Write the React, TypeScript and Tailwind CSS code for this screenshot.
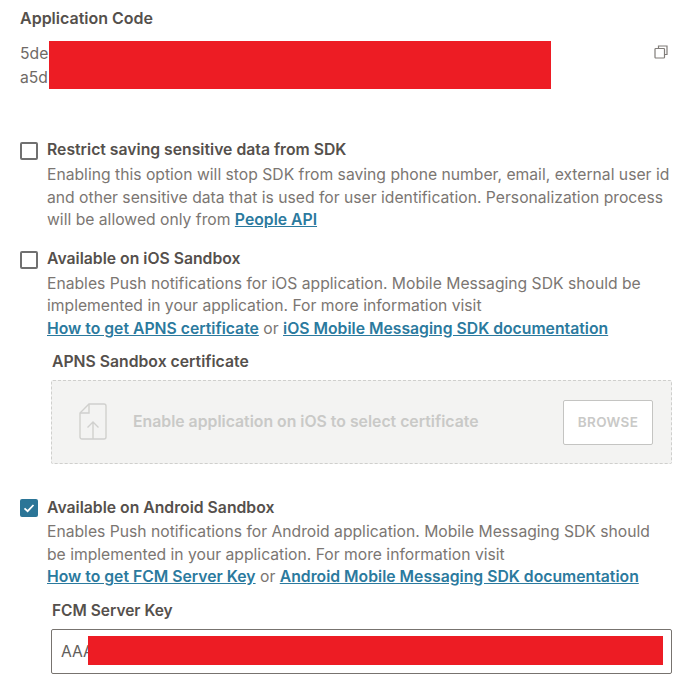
import React from "react";

const Link = ({ children }: { children: React.ReactNode }) => (
  <a className="text-[15.75px] font-semibold text-[#2b7a9e] underline">{children}</a>
);

const Check = ({ checked, tight, label, children }: { checked?: boolean; tight?: boolean; label: string; children: React.ReactNode }) => (
  <div className="flex gap-[9px]">
    {checked ? (
      <div className="mt-[2px] flex h-[18px] w-[18px] shrink-0 items-center justify-center rounded-[2px] bg-[#2b7597]">
        <svg width="12" height="12" viewBox="0 0 12 12" fill="none" stroke="white" strokeWidth="1.8">
          <path d="M1.5 6.4 L4.6 9.2 L10.5 3" />
        </svg>
      </div>
    ) : (
      <div className="mt-[3px] h-[18px] w-[18px] shrink-0 rounded-[2px] border-2 border-[#707070] bg-white" />
    )}
    <div className="min-w-0 flex-1">
      <div className={tight ? "mb-[2.25px] text-[15.75px] leading-[22px] font-semibold text-[#55504c]" : "mb-[3.25px] text-[15.75px] leading-[22px] font-semibold text-[#55504c]"}>{label}</div>
      <div className="text-[15.7px] leading-[22.25px] text-[#7b7672]">{children}</div>
    </div>
  </div>
);

export default function App() {
  return (
    <div className="h-[682px] w-[689px] overflow-hidden bg-white pl-5 pr-[17px] pt-[8px] font-['Inter',sans-serif]">
      <div className="text-[16px] leading-[20px] font-semibold text-[#55504c]">Application Code</div>
      <div className="relative mt-[13px] flex h-[48px] items-start justify-between pr-[4px]">
        <div className="pt-[1px] text-[15.7px] leading-[24px] text-[#6f6a66]">
          <div>5de</div>
          <div>a5d</div>
        </div>
        <svg className="mt-[4px]" width="14" height="14" viewBox="0 0 14 14" fill="none" stroke="#807c79" strokeWidth="1.2">
          <path d="M4.5 3V1h8.5v8.5H11" />
          <rect x="1" y="3.5" width="9.5" height="9.5" rx="0.8" />
        </svg>
        <div className="absolute left-[29px] top-0 h-[48px] w-[502px] bg-[#ed1c24]" />
      </div>

      <div className="mt-[50px]">
        <Check label="Restrict saving sensitive data from SDK">
          Enabling this option will stop SDK from saving phone number, email, external user id and other sensitive data that is used for user identification. Personalization process will be allowed only from <Link>People API</Link>
        </Check>
      </div>

      <div className="mt-[16.75px]">
        <Check label="Available on iOS Sandbox">
          Enables Push notifications for iOS application. Mobile Messaging SDK should be implemented in your application. For more information visit
          <br />
          <Link>How to get APNS certificate</Link> or <Link>iOS Mobile Messaging SDK documentation</Link>
        </Check>
      </div>

      <div className="ml-[31px] mt-[11.5px]">
        <div className="pl-[1px] text-[15.75px] leading-[22px] font-semibold text-[#55504c]">APNS Sandbox certificate</div>
        <div className="mt-[7px] flex h-[84px] items-center rounded-[2px] border border-dashed border-[#cfcfcd] bg-[#f3f3f2] pl-[27px] pr-[18px]">
          <svg width="28" height="38" viewBox="0 0 28 38" fill="none" stroke="#d0d0ce" strokeWidth="1.4">
            <path d="M10 1H25a2 2 0 0 1 2 2V34a2 2 0 0 1-2 2H3a2 2 0 0 1-2-2V10Z" />
            <path d="M10 1V10H1" />
            <path d="M14 36V19M8.5 24.5 14 19l5.5 5.5" />
          </svg>
          <div className="ml-[26px] flex-1 text-[15.8px] font-semibold text-[#c9c9c7]">Enable application on iOS to select certificate</div>
          <div className="flex h-[45px] w-[90px] items-center justify-center rounded-[2px] border border-[#c4c4c2] bg-white text-[13.5px] font-semibold tracking-[0.3px] text-[#c9c9c7]">BROWSE</div>
        </div>
      </div>

      <div className="mt-[32.75px]">
        <Check checked tight label="Available on Android Sandbox">
          Enables Push notifications for Android application. Mobile Messaging SDK should be implemented in your application. For more information visit
          <br />
          <Link>How to get FCM Server Key</Link> or <Link>Android Mobile Messaging SDK documentation</Link>
        </Check>
      </div>

      <div className="ml-[31px] mt-[12px]">
        <div className="pl-[1px] text-[15.5px] leading-[22px] font-semibold text-[#55504c]">FCM Server Key</div>
        <div className="relative mt-[7px] flex h-[45px] items-center rounded-[2px] border border-[#77736f] bg-white pl-[9px] text-[15.7px] text-[#625e5a]">
          AAA
          <div className="absolute left-[36px] right-[8px] top-[6px] h-[29px] bg-[#ed1c24]" />
        </div>
      </div>
    </div>
  );
}
